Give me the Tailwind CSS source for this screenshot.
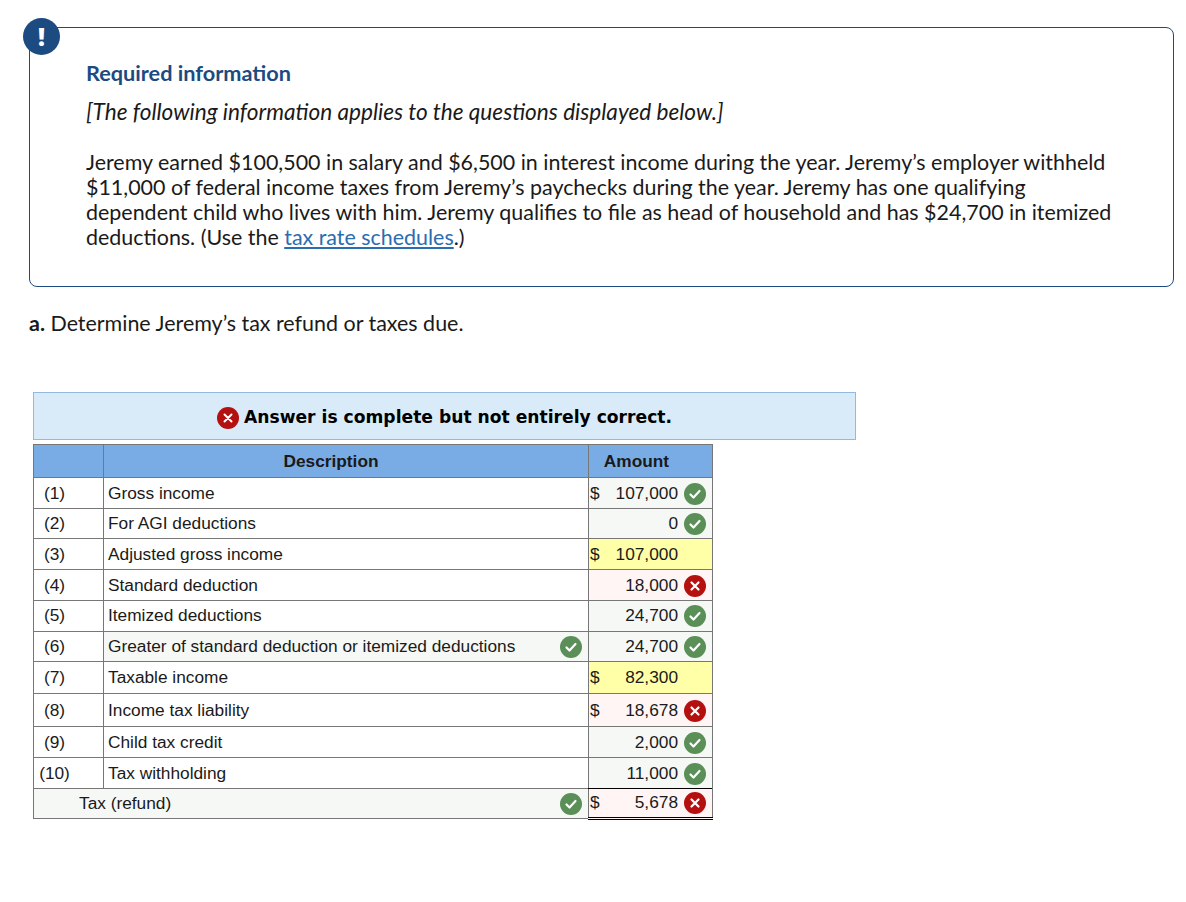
<!DOCTYPE html>
<html lang="en">
<head>
    <meta charset="UTF-8">
    <title>Required information</title>
    <script src="https://cdn.jsdelivr.net/npm/@tailwindcss/browser@4"></script>
</head>
<body class="bg-white font-['Lato',sans-serif] text-[#1a1a1a]">
    <div class="w-[1186px] h-[902px] overflow-hidden pt-[27px] pl-[29px]">
        <!-- Required information box -->
        <div class="relative w-[1145px] h-[260px] border border-[#1c4b82] rounded-lg pl-[56px] pt-[33px] text-[21.45px] leading-[25px]">
            <div class="absolute -left-[7px] -top-[10px] w-[37px] h-[37px] rounded-full bg-[#1c4b82] text-white flex items-center justify-center font-['Open_Sans',sans-serif] font-extrabold text-[24px]">!</div>
            <p class="font-bold text-[21.7px] text-[#1c4b82]">Required information</p>
            <p class="italic text-[22.6px] mt-[13px]">[The following information applies to the questions displayed below.]</p>
            <p class="mt-[26px] w-[1030px]">Jeremy earned $100,500 in salary and $6,500 in interest income during the year. Jeremy’s employer withheld $11,000 of federal income taxes from Jeremy’s paychecks during the year. Jeremy has one qualifying dependent child who lives with him. Jeremy qualifies to file as head of household and has $24,700 in itemized deductions. (Use the <span class="text-[#2a6db0] underline">tax rate schedules</span>.)</p>
        </div>

        <p class="mt-[24px] text-[21.45px] leading-[25px]"><b>a.</b> Determine Jeremy’s tax refund or taxes due.</p>

        <!-- Answer banner -->
        <div class="mt-[56px] ml-[4px] w-[823px] h-[48px] bg-[#d9ebf9] border border-[#93b9dc] pt-[3px] flex items-center justify-center gap-[5px] font-['DejaVu_Sans',sans-serif] font-bold text-[17.15px] text-black">
            <svg width="22" height="22" viewBox="0 0 22 22"><circle cx="11" cy="11" r="11" fill="#b51010"/><path d="M7.500 7.500l7 7M14.500 7.500l-7 7" stroke="#fff" stroke-width="2" stroke-linecap="round"/></svg>
            <span>Answer is complete but not entirely correct.</span>
        </div>

        <!-- Result table -->
        <table class="mt-[4px] ml-[4px] w-[679px] table-fixed border-collapse font-['Liberation_Sans',sans-serif] text-[17.3px] text-[#1a1a1a]">
            <colgroup><col class="w-[70px]"><col class="w-[485px]"><col class="w-[124px]"></colgroup>
            <thead>
                <tr class="h-[33px] bg-[#79ace5]">
                    <th class="border border-[#777]"></th>
                    <th class="border border-[#777] font-bold text-center pr-[30px] pt-[1px]">Description</th>
                    <th class="border border-[#777] font-bold text-center pr-[28px] pt-[1px]">Amount</th>
                </tr>
            </thead>
            <tbody>
                <tr class="h-[31px]">
                    <td class="border border-[#777] text-center pr-[28px] pt-[1px]">(1)</td>
                    <td class="border border-[#777] pl-[4px] pt-[1px]">Gross income</td>
                    <td class="border border-[#777] bg-[#f6f8f6] p-0 pt-[1px]">
                        <div class="flex items-center pl-[1px] pr-[6px]"><span>$</span><span class="flex-1 text-right mr-[6px]">107,000</span>
                            <svg width="22" height="22" viewBox="0 0 22 22"><circle cx="11" cy="11" r="11" fill="#5b8f58"/><path d="M6.500 11.500l3 3 6-6.500" fill="none" stroke="#fff" stroke-width="2.2" stroke-linecap="round" stroke-linejoin="round"/></svg>
                        </div>
                    </td>
                </tr>
                <tr class="h-[30px]">
                    <td class="border border-[#777] text-center pr-[28px]">(2)</td>
                    <td class="border border-[#777] pl-[4px]">For AGI deductions</td>
                    <td class="border border-[#777] bg-[#f6f8f6] p-0">
                        <div class="flex items-center pl-[1px] pr-[6px]"><span class="flex-1 text-right mr-[6px]">0</span>
                            <svg width="22" height="22" viewBox="0 0 22 22"><circle cx="11" cy="11" r="11" fill="#5b8f58"/><path d="M6.500 11.500l3 3 6-6.500" fill="none" stroke="#fff" stroke-width="2.2" stroke-linecap="round" stroke-linejoin="round"/></svg>
                        </div>
                    </td>
                </tr>
                <tr class="h-[31px]">
                    <td class="border border-[#777] text-center pr-[28px] pt-[1px]">(3)</td>
                    <td class="border border-[#777] pl-[4px] pt-[1px]">Adjusted gross income</td>
                    <td class="border border-[#777] border-t-black bg-[#ffffa8] p-0 pt-[1px]">
                        <div class="flex items-center pl-[1px] pr-[6px]"><span>$</span><span class="flex-1 text-right mr-[28px]">107,000</span></div>
                    </td>
                </tr>
                <tr class="h-[31px]">
                    <td class="border border-[#777] text-center pr-[28px] pt-[1px]">(4)</td>
                    <td class="border border-[#777] pl-[4px] pt-[1px]">Standard deduction</td>
                    <td class="border border-[#777] bg-[#fff5f4] p-0 pt-[1px]">
                        <div class="flex items-center pl-[1px] pr-[6px]"><span class="flex-1 text-right mr-[6px]">18,000</span>
                            <svg width="22" height="22" viewBox="0 0 22 22"><circle cx="11" cy="11" r="11" fill="#b51010"/><path d="M7.500 7.500l7 7M14.500 7.500l-7 7" stroke="#fff" stroke-width="2.2" stroke-linecap="round"/></svg>
                        </div>
                    </td>
                </tr>
                <tr class="h-[31px]">
                    <td class="border border-[#777] text-center pr-[28px]">(5)</td>
                    <td class="border border-[#777] pl-[4px]">Itemized deductions</td>
                    <td class="border border-[#777] bg-[#f6f8f6] p-0">
                        <div class="flex items-center pl-[1px] pr-[6px]"><span class="flex-1 text-right mr-[6px]">24,700</span>
                            <svg width="22" height="22" viewBox="0 0 22 22"><circle cx="11" cy="11" r="11" fill="#5b8f58"/><path d="M6.500 11.500l3 3 6-6.500" fill="none" stroke="#fff" stroke-width="2.2" stroke-linecap="round" stroke-linejoin="round"/></svg>
                        </div>
                    </td>
                </tr>
                <tr class="h-[30px]">
                    <td class="border border-[#777] text-center pr-[28px]">(6)</td>
                    <td class="border border-[#777] bg-[#f6f8f6] p-0">
                        <div class="flex items-center justify-between pl-[4px] pr-[6px]"><span>Greater of standard deduction or itemized deductions</span>
                            <svg width="22" height="22" viewBox="0 0 22 22"><circle cx="11" cy="11" r="11" fill="#5b8f58"/><path d="M6.500 11.500l3 3 6-6.500" fill="none" stroke="#fff" stroke-width="2.2" stroke-linecap="round" stroke-linejoin="round"/></svg>
                        </div>
                    </td>
                    <td class="border border-[#777] bg-[#f6f8f6] p-0">
                        <div class="flex items-center pl-[1px] pr-[6px]"><span class="flex-1 text-right mr-[6px]">24,700</span>
                            <svg width="22" height="22" viewBox="0 0 22 22"><circle cx="11" cy="11" r="11" fill="#5b8f58"/><path d="M6.500 11.500l3 3 6-6.500" fill="none" stroke="#fff" stroke-width="2.2" stroke-linecap="round" stroke-linejoin="round"/></svg>
                        </div>
                    </td>
                </tr>
                <tr class="h-[32px]">
                    <td class="border border-[#777] text-center pr-[28px]">(7)</td>
                    <td class="border border-[#777] pl-[4px]">Taxable income</td>
                    <td class="border border-[#777] bg-[#ffffa8] p-0">
                        <div class="flex items-center pl-[1px] pr-[6px]"><span>$</span><span class="flex-1 text-right mr-[28px]">82,300</span></div>
                    </td>
                </tr>
                <tr class="h-[33px]">
                    <td class="border border-[#777] text-center pr-[28px] pt-[1px]">(8)</td>
                    <td class="border border-[#777] pl-[4px] pt-[1px]">Income tax liability</td>
                    <td class="border border-[#777] bg-[#fff5f4] p-0 pt-[1px]">
                        <div class="flex items-center pl-[1px] pr-[6px]"><span>$</span><span class="flex-1 text-right mr-[6px]">18,678</span>
                            <svg width="22" height="22" viewBox="0 0 22 22"><circle cx="11" cy="11" r="11" fill="#b51010"/><path d="M7.500 7.500l7 7M14.500 7.500l-7 7" stroke="#fff" stroke-width="2.2" stroke-linecap="round"/></svg>
                        </div>
                    </td>
                </tr>
                <tr class="h-[31px]">
                    <td class="border border-[#777] text-center pr-[28px] pt-[1px]">(9)</td>
                    <td class="border border-[#777] pl-[4px] pt-[1px]">Child tax credit</td>
                    <td class="border border-[#777] bg-[#f6f8f6] p-0 pt-[1px]">
                        <div class="flex items-center pl-[1px] pr-[6px]"><span class="flex-1 text-right mr-[6px]">2,000</span>
                            <svg width="22" height="22" viewBox="0 0 22 22"><circle cx="11" cy="11" r="11" fill="#5b8f58"/><path d="M6.500 11.500l3 3 6-6.500" fill="none" stroke="#fff" stroke-width="2.2" stroke-linecap="round" stroke-linejoin="round"/></svg>
                        </div>
                    </td>
                </tr>
                <tr class="h-[31px]">
                    <td class="border border-[#777] text-center pr-[28px] pt-[1px]">(10)</td>
                    <td class="border border-[#777] pl-[4px] pt-[1px]">Tax withholding</td>
                    <td class="border border-[#777] bg-[#f6f8f6] p-0 pt-[1px]">
                        <div class="flex items-center pl-[1px] pr-[6px]"><span class="flex-1 text-right mr-[6px]">11,000</span>
                            <svg width="22" height="22" viewBox="0 0 22 22"><circle cx="11" cy="11" r="11" fill="#5b8f58"/><path d="M6.500 11.500l3 3 6-6.500" fill="none" stroke="#fff" stroke-width="2.2" stroke-linecap="round" stroke-linejoin="round"/></svg>
                        </div>
                    </td>
                </tr>
                <tr class="h-[30px]">
                    <td colspan="2" class="border border-[#777] bg-[#f6f8f6] p-0">
                        <div class="flex items-center justify-between pl-[45px] pr-[6px]"><span>Tax (refund)</span>
                            <svg width="22" height="22" viewBox="0 0 22 22"><circle cx="11" cy="11" r="11" fill="#5b8f58"/><path d="M6.500 11.500l3 3 6-6.500" fill="none" stroke="#fff" stroke-width="2.2" stroke-linecap="round" stroke-linejoin="round"/></svg>
                        </div>
                    </td>
                    <td class="border border-[#777] border-t-black border-b-[3px] border-b-black border-double bg-[#fff5f4] p-0">
                        <div class="flex items-center pl-[1px] pr-[6px]"><span>$</span><span class="flex-1 text-right mr-[6px]">5,678</span>
                            <svg width="22" height="22" viewBox="0 0 22 22"><circle cx="11" cy="11" r="11" fill="#b51010"/><path d="M7.500 7.500l7 7M14.500 7.500l-7 7" stroke="#fff" stroke-width="2.2" stroke-linecap="round"/></svg>
                        </div>
                    </td>
                </tr>
            </tbody>
        </table>
    </div>
</body>
</html>
